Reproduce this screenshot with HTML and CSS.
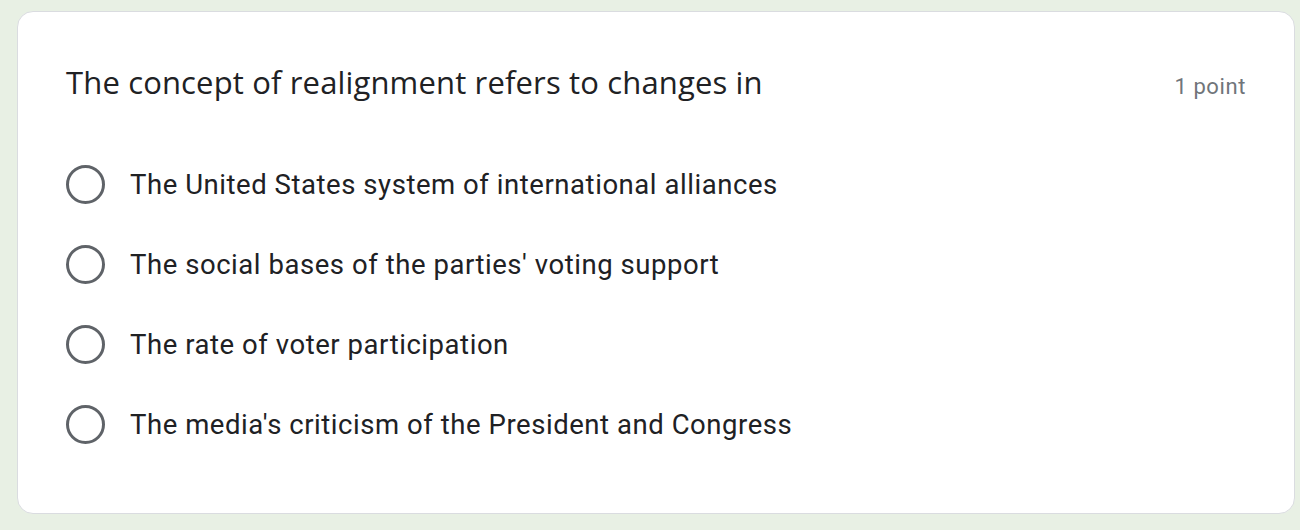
FILE: index.html
```html
<!DOCTYPE html>
<html>
<head>
<meta charset="utf-8">
<link rel="stylesheet" href="styles.css">
</head>
<body>
<div class="card">
  <div class="header">
    <div class="title">The concept of realignment refers to changes in</div>
    <div class="points">1 point</div>
  </div>
  <div class="options">
    <label class="option"><span class="radio"></span><span class="label">The United States system of international alliances</span></label>
    <label class="option"><span class="radio"></span><span class="label">The social bases of the parties' voting support</span></label>
    <label class="option"><span class="radio"></span><span class="label">The rate of voter participation</span></label>
    <label class="option"><span class="radio"></span><span class="label">The media's criticism of the President and Congress</span></label>
  </div>
</div>
</body>
</html>
```
FILE: styles.css
```css
html, body {
  margin: 0;
  padding: 0;
  background: #e8f0e4;
  width: 1300px;
  height: 530px;
  overflow: hidden;
}
body {
  padding: 11px 5px 0 17px;
  box-sizing: border-box;
  font-family: Roboto, "Liberation Sans", sans-serif;
}
.card {
  background: #fff;
  border: 1.5px solid #dadce0;
  border-radius: 16px;
  height: 503px;
  box-sizing: border-box;
  padding: 0 48px 0 48px;
}
.header {
  display: flex;
  justify-content: space-between;
  align-items: baseline;
  padding-top: 49px;
}
.title {
  font-family: "Open Sans", Roboto, sans-serif;
  font-size: 31px;
  color: #202124;
  letter-spacing: 0.15px;
}
.points {
  font-size: 22px;
  color: #70757a;
  letter-spacing: 0.6px;
}
.options {
  display: flex;
  flex-direction: column;
  padding-top: 41px;
}
.option {
  display: flex;
  align-items: center;
  height: 80px;
}
.radio {
  width: 33px;
  height: 33px;
  border: 3.5px solid #5f6368;
  border-radius: 50%;
  box-sizing: content-box;
  flex: none;
  margin-right: 25px;
}
.label {
  font-size: 27.5px;
  color: #202124;
  letter-spacing: 0.55px;
}
```
